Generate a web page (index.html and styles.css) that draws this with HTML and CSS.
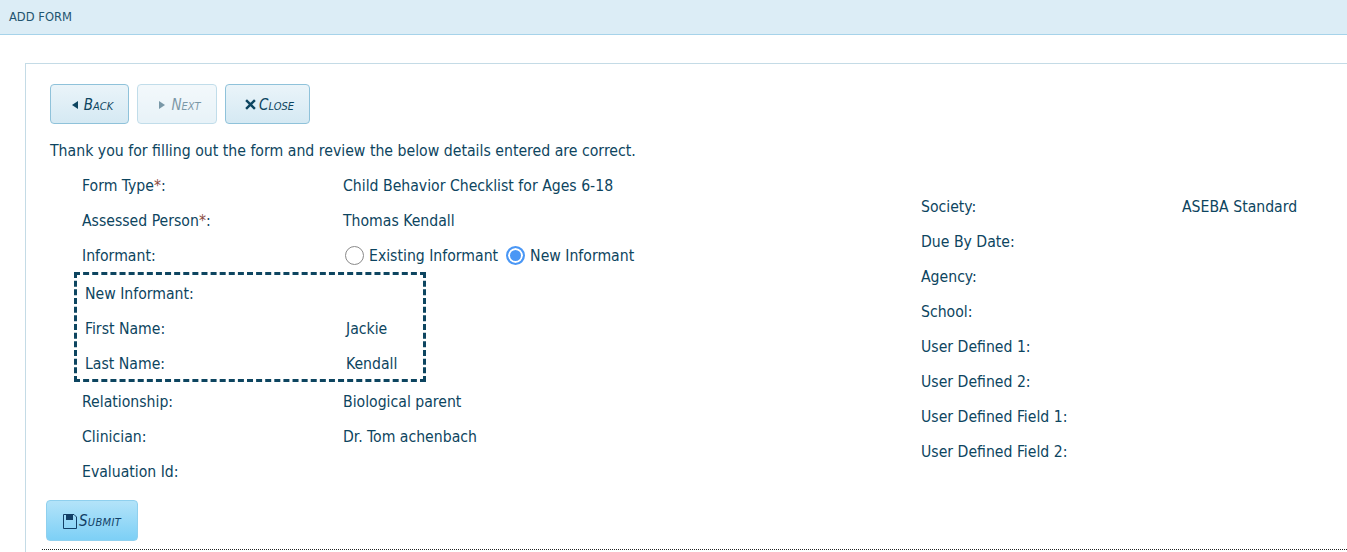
FILE: index.html
```html
<!DOCTYPE html>
<html lang="en">
<head>
<meta charset="utf-8">
<title>Add Form</title>
<link rel="stylesheet" href="styles.css">
</head>
<body>
<header class="topbar">ADD FORM</header>
<main class="panel">
  <div class="toolbar">
    <button class="btn" type="button"><svg class="tri" viewBox="0 0 6 8"><path d="M6 0V8L0 4Z"/></svg>Back</button>
    <button class="btn btn-off" type="button"><svg class="tri" viewBox="0 0 6 8"><path d="M0 0V8L6 4Z"/></svg>Next</button>
    <button class="btn btn-close" type="button"><svg class="x" viewBox="0 0 10 10"><path d="M1 1L9 9M9 1L1 9"/></svg>Close</button>
  </div>
  <p class="intro">Thank you for filling out the form and review the below details entered are correct.</p>
  <div class="columns">
    <div class="col-left">
      <div class="row"><span class="lbl">Form Type<em>*</em>:</span><span>Child Behavior Checklist for Ages 6-18</span></div>
      <div class="row"><span class="lbl">Assessed Person<em>*</em>:</span><span>Thomas Kendall</span></div>
      <div class="row"><span class="lbl">Informant:</span>
        <span class="radios">
          <span class="radio"></span><span class="radio-text">Existing Informant</span>
          <span class="radio radio-on"></span><span>New Informant</span>
        </span>
      </div>
      <div class="dashed">
        <div class="row"><span class="lbl">New Informant:</span></div>
        <div class="row"><span class="lbl">First Name:</span><span>Jackie</span></div>
        <div class="row"><span class="lbl">Last Name:</span><span>Kendall</span></div>
      </div>
      <div class="row"><span class="lbl">Relationship:</span><span>Biological parent</span></div>
      <div class="row"><span class="lbl">Clinician:</span><span>Dr. Tom achenbach</span></div>
      <div class="row"><span class="lbl">Evaluation Id:</span></div>
    </div>
    <div class="col-right">
      <div class="row"><span class="lbl">Society:</span><span>ASEBA Standard</span></div>
      <div class="row"><span class="lbl">Due By Date:</span></div>
      <div class="row"><span class="lbl">Agency:</span></div>
      <div class="row"><span class="lbl">School:</span></div>
      <div class="row"><span class="lbl">User Defined 1:</span></div>
      <div class="row"><span class="lbl">User Defined 2:</span></div>
      <div class="row"><span class="lbl">User Defined Field 1:</span></div>
      <div class="row"><span class="lbl">User Defined Field 2:</span></div>
    </div>
  </div>
  <button class="btn btn-submit" type="button"><svg class="save" viewBox="0 0 14 15"><path class="save-body" d="M.5 .5H11L13.5 3V14.5H.5Z"/><path class="save-top" d="M3 1H10V6H3Z"/></svg>Submit</button>
  <div class="rule"></div>
</main>
</body>
</html>
```
FILE: styles.css
```css
html, body { margin: 0; padding: 0; height: 552px; overflow: hidden; background: #fff; }
body { font-family: "DejaVu Sans Condensed", "DejaVu Sans", sans-serif; font-size: 15.65px; color: #0d4560; }
.topbar {
  height: 34px; line-height: 34px; padding-left: 9px;
  background: #dcedf6; border-bottom: 1px solid #a6d3ea;
  font-size: 12.8px; color: #1f5570;
}
.panel {
  margin: 28px 0 0 25px; padding: 20px 0 0 24px;
  border-top: 1px solid #c4dbe6; border-left: 1px solid #c4dbe6;
  height: 500px; box-sizing: border-box; overflow: hidden;
}
.toolbar { display: flex; gap: 8px; }
.btn {
  height: 40px; box-sizing: border-box; padding: 1px 0 0 6px; display: inline-flex; align-items: center; justify-content: center;
  border: 1px solid #8fc2da; border-radius: 4px;
  background: linear-gradient(#eaf4f9, #d5e9f3);
  font-family: inherit; font-size: 15px; font-style: italic; font-variant: small-caps; color: #0d4560;
  width: 79px;
}
.btn-off { width: 80px; opacity: .55; }
.btn-close { width: 85px; padding-left: 4px; }
.tri { width: 6px; height: 8px; margin-right: 6px; fill: currentColor; }
.x { width: 11px; height: 11px; margin-right: 3px; stroke: currentColor; stroke-width: 2.2; fill: none; }
.intro { margin: 17px 0 0; line-height: 20px; font-size: 15.7px; }
.columns { display: flex; }
.col-left { width: 839px; margin-left: 32px; padding-top: 6px; flex: none; }
.col-right { padding-top: 27px; flex: none; }
.row { display: flex; height: 35px; box-sizing: border-box; padding-top: 2px; align-items: center; }
.lbl { width: 261px; flex: none; }
em { font-style: normal; color: #8a4a3e; }
.radios { display: flex; align-items: center; }
.radio {
  width: 19px; height: 19px; box-sizing: border-box; border: 1.5px solid #8a8a8a; border-radius: 50%;
  margin: 0 5px 0 2px; background: #fff;
}
.radio-text { margin-right: 7px; }
.radio-on { margin: 0 5px 0 1px; border: 2px solid #4a97f5; background: #4a97f5; box-shadow: inset 0 0 0 2px #fff; }
.dashed {
  width: 352px; height: 110px; box-sizing: border-box; margin: 0 0 1px -8px; padding: 0 0 0 9px;
  border: 3px dashed #0d4560;
}
.dashed .row { margin-left: -1px; }
.btn-submit {
  display: flex; width: 92px; height: 41px; margin: 12px 0 0 -4px; padding: 1px 0 0;
  border-color: #8fd0ee; background: linear-gradient(#b3e3f9, #7dd0f6); color: #123f66; font-size: 15px; letter-spacing: .35px;
}
.save { width: 14px; height: 15px; margin-right: 2px; }
.save-body { fill: none; stroke: #123f66; }
.save-top { fill: #123f66; }
.rule { margin: 8px 0 0 -8px; border-top: 1px dotted #222; }
```
